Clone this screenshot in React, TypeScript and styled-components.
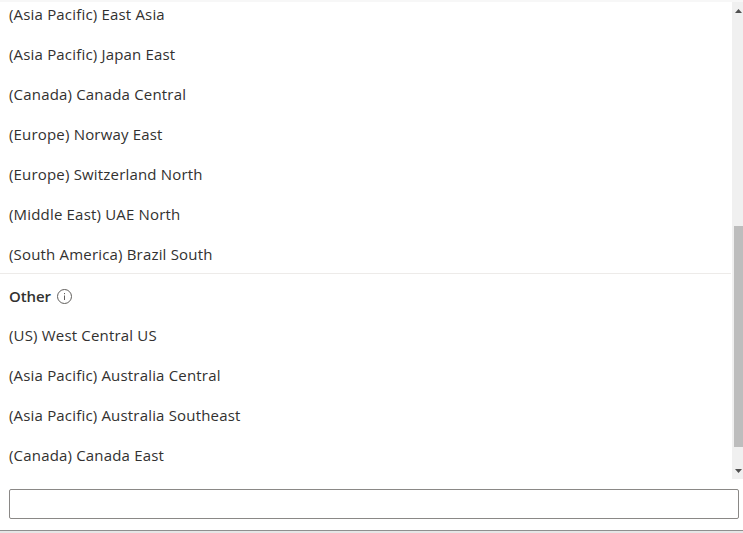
import React from 'react'
import styled, { createGlobalStyle } from 'styled-components'

const GlobalStyle = createGlobalStyle`
    html, body {
        margin: 0;
        padding: 0;
        background: #fff;
    }

    * {
        box-sizing: border-box;
    }
`

const topRegions = [
    '(Asia Pacific) East Asia',
    '(Asia Pacific) Japan East',
    '(Canada) Canada Central',
    '(Europe) Norway East',
    '(Europe) Switzerland North',
    '(Middle East) UAE North',
    '(South America) Brazil South',
]

const otherRegions = [
    '(US) West Central US',
    '(Asia Pacific) Australia Central',
    '(Asia Pacific) Australia Southeast',
    '(Canada) Canada East',
]

function InfoIcon() {
    return (
        <svg width='15' height='15' viewBox='0 0 15 15' fill='none' stroke='#605e5c'>
            <circle cx='7.5' cy='7.5' r='7' />
            <path d='M7.5 6.5v4.5' />
            <path d='M7.5 4v1.2' />
        </svg>
    )
}

function App() {
    return (
        <Wrapper>
            <GlobalStyle />
            <TopEdge />
            <DropdownBody>
                <RegionList>
                    {topRegions.map((region) => (
                        <RegionRow key={region}>{region}</RegionRow>
                    ))}
                    <GroupHeader>
                        Other
                        <InfoIcon />
                    </GroupHeader>
                    {otherRegions.map((region) => (
                        <RegionRow key={region}>{region}</RegionRow>
                    ))}
                </RegionList>
                <Scrollbar>
                    <ArrowSlot>
                        <svg width='7' height='4' viewBox='0 0 7 4'><path d='M3.5 0L7 4H0z' fill='#505050' /></svg>
                    </ArrowSlot>
                    <ScrollTrack>
                        <ScrollThumb />
                    </ScrollTrack>
                    <ArrowSlot>
                        <svg width='7' height='4' viewBox='0 0 7 4'><path d='M0 0h7L3.5 4z' fill='#505050' /></svg>
                    </ArrowSlot>
                </Scrollbar>
            </DropdownBody>
            <FilterRow>
                <FilterInput />
            </FilterRow>
            <BottomEdge />
        </Wrapper>
    )
}

export default App

const Wrapper = styled.main`
    width: 743px;
    height: 533px;
    overflow: hidden;
    display: flex;
    flex-direction: column;
    background: #fff;
    font-family: 'Open Sans', 'Liberation Sans', sans-serif;
`

const TopEdge = styled.div`
    height: 2px;
    flex: none;
    background: #f7f7f7;
`

const DropdownBody = styled.div`
    height: 477px;
    flex: none;
    display: flex;
`

const RegionList = styled.div`
    flex: 1;
    min-width: 0;
    margin-top: -8px;
`

const RegionRow = styled.div`
    height: 40px;
    padding-left: 9px;
    display: flex;
    align-items: center;
    color: #323130;
    font-size: 15px;
    letter-spacing: 0.18px;
    white-space: nowrap;
`

const GroupHeader = styled.div`
    height: 42px;
    margin: -1px 1px 0 0;
    padding: 3px 0 0 9px;
    display: flex;
    align-items: center;
    gap: 6px;
    border-top: 1px solid #edebe9;
    color: #323130;
    font-size: 15px;
    font-weight: 600;
    letter-spacing: -0.1px;
`

const Scrollbar = styled.div`
    width: 11px;
    flex: none;
    display: flex;
    flex-direction: column;
    background: #f0f0f0;
`

const ArrowSlot = styled.div`
    height: 17px;
    flex: none;
    display: flex;
    align-items: center;
    justify-content: center;
    padding-left: 2px;
`

const ScrollTrack = styled.div`
    flex: 1;
    padding: 207px 0 15px 2px;
    display: flex;
`

const ScrollThumb = styled.div`
    flex: 1;
    background: #bdbdbd;
`

const FilterRow = styled.div`
    flex: none;
    height: 51px;
    padding: 10px 4px 0 9px;
`

const FilterInput = styled.input`
    display: block;
    width: 100%;
    height: 30px;
    border: 1px solid #8a8886;
    border-radius: 2px;
    background: #fff;
    outline: none;
`

const BottomEdge = styled.div`
    flex: none;
    height: 3px;
    background: linear-gradient(#8f8f8f 0 1px, #e6e6e6 1px);
`
